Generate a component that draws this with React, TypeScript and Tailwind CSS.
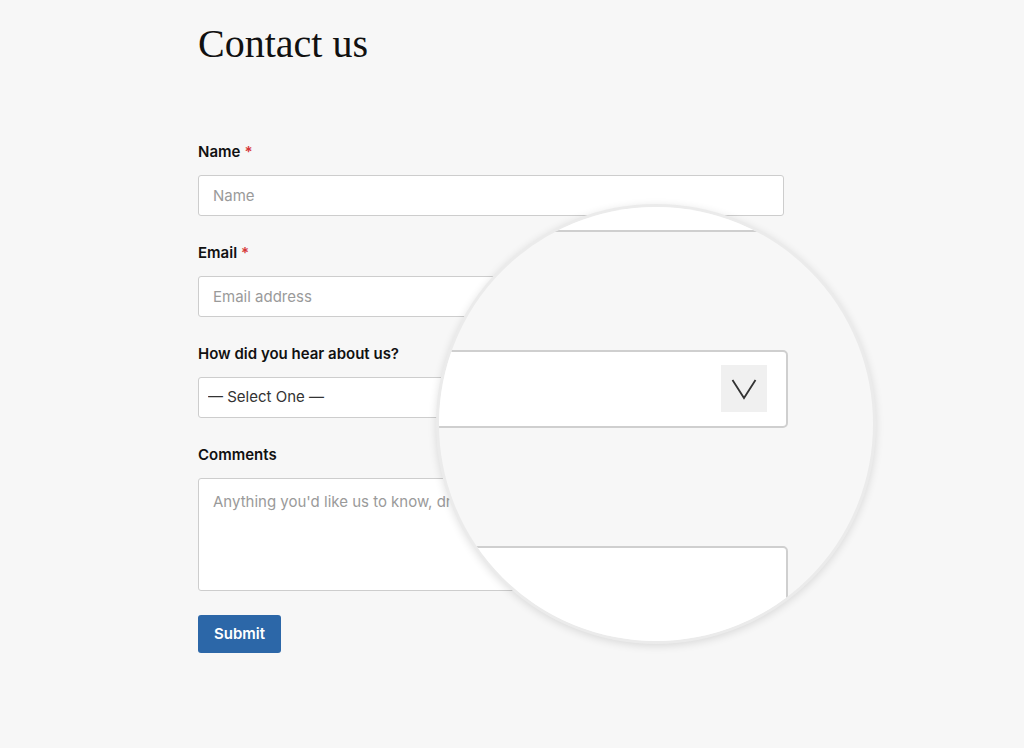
import { ChevronDown } from "lucide-react";

const fieldFont = { fontFamily: "Inter, 'Noto Sans', sans-serif" };

function Field({ label, required, children }: { label: string; required?: boolean; children: React.ReactNode }) {
  return (
    <div className="flex flex-col">
      <label className="text-[15px] font-semibold leading-[20px] text-[#111] mb-[13px]">
        {label}
        {required && <span className="text-[#d63638] ml-1">*</span>}
      </label>
      {children}
    </div>
  );
}

function Lens() {
  // magnified view of the select over the form
  return (
    <div className="absolute left-[436px] top-[204px] w-[440px] h-[440px] rounded-full overflow-hidden bg-[#f7f7f7] border-[3px] border-[#ebebeb] shadow-[0_2px_8px_rgba(0,0,0,0.12)]">
      <div className="absolute left-[-200px] top-[-62px] w-[549px] h-[87px] bg-white border-2 border-[#cfcfcf] rounded-[5px]" />
      <div className="absolute left-[-200px] top-[143px] w-[549px] h-[78px] bg-white border-2 border-[#cfcfcf] rounded-[5px]">
        <div className="absolute left-[480px] top-[13px] w-[46px] h-[47px] bg-[#f0f0f0] flex items-center justify-center">
          <svg width="26" height="22" viewBox="0 0 26 22" fill="none">
            <path d="M1.5 2 L13 20 L24.5 2" stroke="#333" strokeWidth="1.8" strokeLinejoin="miter" />
          </svg>
        </div>
      </div>
      <div className="absolute left-[-200px] top-[339px] w-[549px] h-[200px] bg-white border-2 border-[#cfcfcf] rounded-[5px]" />
    </div>
  );
}

export default function App() {
  const boxCls =
    "w-full h-[41px] bg-white border border-[#cdcdcd] rounded-[3px] text-[15px] text-[#333] placeholder:text-[#9a9a9a] outline-none";

  return (
    <div className="relative min-h-[748px] w-[1024px] bg-[#f7f7f7] overflow-hidden" style={fieldFont}>
      <div className="pl-[198px] pt-[20px] w-[784px]">
        <h1
          className="text-[40px] leading-[48px] text-[#111] mb-[74px]"
          style={{ fontFamily: "'Liberation Serif', serif" }}
        >
          Contact us
        </h1>

        <form className="flex flex-col gap-[27px]">
          <Field label="Name" required>
            <input className={boxCls + " px-[14px]"} placeholder="Name" />
          </Field>
          <Field label="Email" required>
            <input className={boxCls + " px-[14px]"} placeholder="Email address" />
          </Field>
          <Field label="How did you hear about us?">
            <div className="relative">
              <select className={boxCls + " appearance-none px-[9px]"} defaultValue="">
                <option value="">— Select One —</option>
              </select>
              <ChevronDown className="absolute right-3 top-3 w-4 h-4 text-[#555]" />
            </div>
          </Field>
          <Field label="Comments">
            <textarea
              className="w-full h-[113px] bg-white border border-[#cdcdcd] rounded-[3px] px-[14px] py-[12px] text-[15px] text-[#333] placeholder:text-[#9a9a9a] outline-none resize-none"
              placeholder="Anything you'd like us to know, drop it here"
            />
          </Field>
        </form>

        <button className="mt-[24px] h-[38px] px-[16px] bg-[#2c67a8] text-white text-[15px] font-semibold rounded-[3px]">
          Submit
        </button>
      </div>

      <Lens />
    </div>
  );
}
